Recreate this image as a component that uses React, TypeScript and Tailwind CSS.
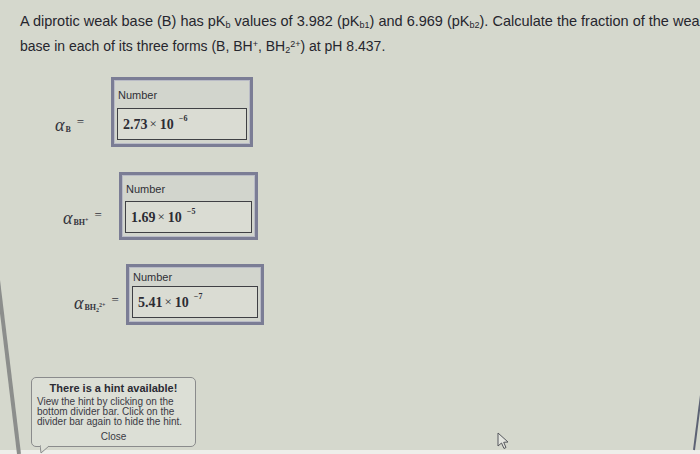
import React from 'react';

type Row = {
    left: string;
    labelW: string;
    top: string;
    boxW: string;
    boxH: string;
    value: string;
    exp: string;
    sub: React.ReactNode;
};

const rows: Row[] = [
    { left: 'ml-[35px]', labelW: 'w-[56px]', top: 'mt-[18px]', boxW: 'w-[142px]', boxH: 'h-[70px]', value: '2.73', exp: '−6', sub: <span>B</span> },
    { left: 'ml-[43px]', labelW: 'w-[56px]', top: 'mt-[25px]', boxW: 'w-[139px]', boxH: 'h-[68px]', value: '1.69', exp: '−5', sub: <span>BH<sup className="text-[6px]">+</sup></span> },
    { left: 'ml-[54px]', labelW: 'w-[52px]', top: 'mt-[24px]', boxW: 'w-[138px]', boxH: 'h-[61px]', value: '5.41', exp: '−7', sub: <span>BH<sub className="text-[6px]">2</sub><sup className="text-[6px]">2+</sup></span> },
];

const AnswerRow = ({ row }: { row: Row }) => (
    <div className={`flex items-end ${row.left} ${row.top}`}>
        {/* alpha label */}
        <div className={`${row.labelW} shrink-0 flex items-start pb-[13px] font-['Liberation_Serif',serif] text-[#34343c]`}>
            <span className="italic text-[18px] leading-none">α</span>
            <span className="text-[8px] font-bold leading-none mt-[10px] ml-[1px]">{row.sub}</span>
            <span className="text-[13px] leading-none ml-[6px] -mt-[1px]">=</span>
        </div>
        {/* number box */}
        <div className={`${row.boxW} ${row.boxH} shrink-0 flex flex-col border-[3px] border-[#7b7d95] bg-[#d2d5cd] shadow-[inset_0_0_0_1px_#b9bbc6]`}>
            <div className="flex-1 flex items-center px-[4px] pt-[2px] font-['Liberation_Sans',Arial,sans-serif] text-[11px] text-[#2f3036]">
                Number
            </div>
            <div className="mx-[3px] mb-[4px] h-[32px] border border-[#3f4044] bg-[#dadcd3] flex items-center px-[5px] font-['Liberation_Serif',serif] text-[14px] font-bold text-[#2c2c34]">
                <span>{row.value}</span>
                <span className="font-normal mx-[2px] text-[13px]">×</span>
                <span className="ml-[1px]">10</span>
                <span className="text-[8px] ml-[5px] -mt-[10px]">{row.exp}</span>
            </div>
        </div>
    </div>
);

export default function App() {
    return (
        <div className="relative w-[700px] h-[454px] overflow-hidden flex flex-col bg-[#d5d8cd] font-['Liberation_Sans',Arial,sans-serif] text-[#26262e]">
            {/* question */}
            <div className="pl-[20px] pt-[9px] leading-[25px] whitespace-nowrap">
                <p className="text-[14.5px]">
                    A diprotic weak base (B) has pK<sub className="text-[9px]">b</sub> values of 3.982 (pK<sub className="text-[9px]">b1</sub>) and 6.969 (pK<sub className="text-[9px]">b2</sub>). Calculate the fraction of the weak
                </p>
                <p className="text-[14px]">
                    base in each of its three forms (B, BH<sup className="text-[9px]">+</sup>, BH<sub className="text-[9px]">2</sub><sup className="text-[9px]">2+</sup>) at pH 8.437.
                </p>
            </div>

            <div className="pl-[20px]">
                {rows.map((r, i) => (
                    <AnswerRow key={i} row={r} />
                ))}

                {/* hint bubble */}
                <div className="relative ml-[11px] mt-[52px] w-[165px] h-[70px] rounded-[5px] border border-[#8a8b8c] bg-[#dcdfd6] flex flex-col items-center pt-[4px] text-[#2b2b33]">
                    <div className="text-[11px] font-bold leading-[12px]">There is a hint available!</div>
                    <div className="text-[10px] leading-[10px] text-left self-start pl-[5px] pt-[3px] text-[#3a3a44]">
                        View the hint by clicking on the<br />
                        bottom divider bar. Click on the<br />
                        divider bar again to hide the hint.
                    </div>
                    <div className="text-[10px] leading-[12px] mt-[4px] text-[#3a3a44]">Close</div>
                    <svg className="absolute left-[8px] -bottom-[8px]" width="16" height="9" viewBox="0 0 16 9">
                        <path d="M0 0 L1 8 L9 1" fill="#dcdfd6" stroke="#8a8b8c" strokeWidth="1" />
                    </svg>
                </div>
            </div>

            <div className="mt-auto h-[4px] bg-[#eeeeea]" />

            {/* screen frame edges in the photo */}
            <svg className="absolute inset-0 pointer-events-none" width="700" height="454">
                <line x1="-2" y1="280" x2="19" y2="454" stroke="#8c8e8c" strokeWidth="4" />
                <line x1="701" y1="395" x2="694" y2="450" stroke="#5d6274" strokeWidth="2" />
            </svg>

            {/* mouse pointer */}
            <svg className="absolute left-[497px] top-[432px]" width="14" height="18" viewBox="0 0 14 18">
                <path d="M1 1 L1 14 L4.5 11 L7 16.5 L9 15.5 L6.7 10.3 L11 10 Z" fill="#e4e6e0" stroke="#55575c" strokeWidth="1" strokeLinejoin="round" />
            </svg>
        </div>
    );
}
